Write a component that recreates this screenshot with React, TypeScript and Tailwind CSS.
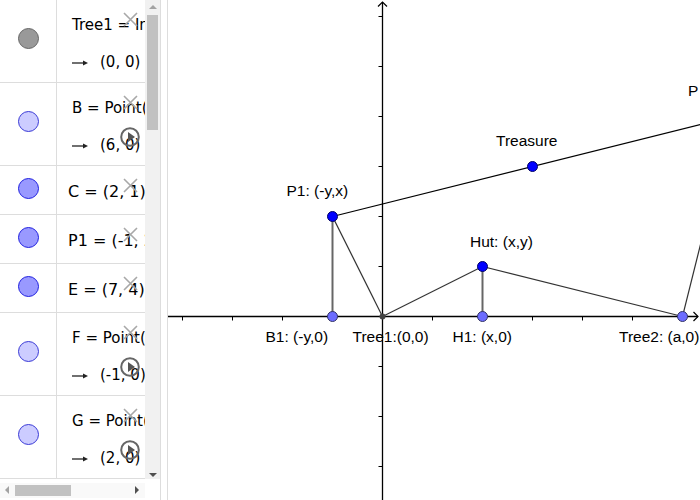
import React from 'react'

type Row = {
  tall: boolean
  dot: 'gray' | 'light' | 'mid'
  main: string
  value?: string
  play?: boolean
}

const rows: Row[] = [
  { tall: true, dot: 'gray', main: 'Tree1 = Intersect(xAxis, f)', value: '(0, 0)' },
  { tall: true, dot: 'light', main: 'B = Point(xAxis)', value: '(6, 0)', play: true },
  { tall: false, dot: 'mid', main: 'C = (2, 1)' },
  { tall: false, dot: 'mid', main: 'P1 = (-1, 2)' },
  { tall: false, dot: 'mid', main: 'E = (7, 4)' },
  { tall: true, dot: 'light', main: 'F = Point(xAxis)', value: '(-1, 0)', play: true },
  { tall: true, dot: 'light', main: 'G = Point(xAxis)', value: '(2, 0)', play: true },
]

const dotClass = {
  gray: 'bg-[#999999] border-[#666666]',
  light: 'bg-[#ccccff] border-[#3a3ad6]',
  mid: 'bg-[#9999ff] border-[#2020e0]',
}

const listFont = { fontFamily: "'DejaVu Sans', 'Liberation Sans', sans-serif" }

const Arrow = () => (
  <svg width="16" height="8" viewBox="0 0 16 8" className="shrink-0">
    <line x1="0" y1="4" x2="13" y2="4" stroke="#222" strokeWidth="1.3" />
    <path d="M11 1.5 L16 4 L11 6.5 Z" fill="#222" />
  </svg>
)

const DeleteIcon = () => (
  <svg width="15" height="15" viewBox="0 0 15 15" className="absolute left-[123px] top-[12px]">
    <path d="M1 1 L14 14 M14 1 L1 14" stroke="#a8a8a8" strokeWidth="1.6" />
  </svg>
)

const PlayIcon = () => (
  <svg width="20" height="20" viewBox="0 0 20 20" className="absolute left-[120px] top-[44px]">
    <circle cx="10" cy="10" r="8.8" fill="none" stroke="#666" strokeWidth="2" />
    <path d="M8 5 L15 10 L8 15 Z" fill="#555" />
  </svg>
)

const AlgebraRow = ({ row }: { row: Row }) => (
  <div
    className={
      row.tall
        ? 'relative flex h-[83px] border-b border-[#dddddd]'
        : 'relative flex h-[49px] border-b border-[#dddddd]'
    }
  >
    <div
      className={
        row.tall
          ? 'flex w-[57px] shrink-0 items-center justify-center border-r border-[#dddddd] pb-[6px]'
          : 'flex w-[57px] shrink-0 items-center justify-center border-r border-[#dddddd] pb-[4px]'
      }
    >
      <div className={'h-[21px] w-[21px] rounded-full border ' + dotClass[row.dot]} />
    </div>
    <div
      className={
        row.tall
          ? 'flex flex-col pl-[15px] pt-[7px] text-[15px] text-black whitespace-nowrap'
          : 'flex flex-col pl-[11px] pt-[7px] text-[16px] text-black whitespace-nowrap'
      }
      style={listFont}
    >
      <div className="h-[37px] leading-[37px]">{row.main}</div>
      {row.value && (
        <div className="flex h-[37px] items-center gap-[12px] leading-[37px]">
          <Arrow />
          <span>{row.value}</span>
        </div>
      )}
    </div>
    <DeleteIcon />
    {row.play && <PlayIcon />}
  </div>
)

const AlgebraView = () => (
  <div className="flex h-[500px] w-[160px] shrink-0 flex-col bg-white">
    <div className="flex h-[479px]">
      <div className="w-[145px] overflow-hidden">
        {rows.map((r) => (
          <AlgebraRow key={r.main} row={r} />
        ))}
      </div>
      {/* vertical scrollbar */}
      <div className="relative flex w-[15px] flex-col items-center bg-[#f1f1f1]">
        <div className="mt-[5px] h-0 w-0 border-x-[4px] border-b-[4px] border-x-transparent border-b-[#a3a3a3]" />
        <div className="mt-[6px] h-[115px] w-[11px] bg-[#c1c1c1]" />
        <div className="mt-auto mb-[2px] h-0 w-0 border-x-[4px] border-t-[4px] border-x-transparent border-t-[#505050]" />
      </div>
    </div>
    {/* horizontal scrollbar */}
    <div className="flex h-[21px] items-center">
      <div className="mt-[1px] flex h-[15px] w-[145px] items-center bg-[#f9f9f9]">
        <div className="ml-[5px] h-0 w-0 border-y-[4px] border-r-[4px] border-y-transparent border-r-[#a3a3a3]" />
        <div className="ml-[6px] h-[11px] w-[56px] bg-[#c1c1c1]" />
        <div className="ml-auto mr-[6px] h-0 w-0 border-y-[4px] border-l-[4px] border-y-transparent border-l-[#505050]" />
      </div>
    </div>
  </div>
)

// graph in local coords (panel starts at x=168)
const ox = 214.5
const oy = 316.5
const u = 50
const px = (x: number) => ox + x * u
const py = (y: number) => oy - y * u

const GraphView = () => {
  const xTicks = [-4, -3, -2, -1, 1, 2, 3, 4, 5, 6]
  const yTicks = [-3, -2, -1, 1, 2, 3, 4, 5, 6]
  const labelStyle = { fontFamily: "'Liberation Sans', Arial, sans-serif", fontSize: 15.5 }
  return (
    <svg width="532" height="500" viewBox="0 0 532 500" className="block bg-white">
      {/* axes */}
      <line x1="0" y1={oy} x2="530" y2={oy} stroke="#000" strokeWidth="1.3" />
      <line x1={ox} y1="500" x2={ox} y2="2" stroke="#000" strokeWidth="1.3" />
      <path d={`M${ox - 4.5} 6.5 L${ox} 2 L${ox + 4.5} 6.5`} fill="none" stroke="#000" strokeWidth="1.2" />
      <path d={`M525.5 ${oy - 4.5} L530 ${oy} L525.5 ${oy + 4.5}`} fill="none" stroke="#000" strokeWidth="1.2" />
      {xTicks.map((t) => (
        <line key={'x' + t} x1={px(t)} y1={oy} x2={px(t)} y2={oy + 4} stroke="#000" strokeWidth="1" />
      ))}
      {yTicks.map((t) => (
        <line key={'y' + t} x1={ox - 4} y1={py(t)} x2={ox} y2={py(t)} stroke="#000" strokeWidth="1" />
      ))}

      {/* segments */}
      <line x1={px(-1)} y1={py(2)} x2={px(7)} y2={py(4)} stroke="#000" strokeWidth="1.2" />
      <line x1={px(-1)} y1={py(2)} x2={px(0)} y2={py(0)} stroke="#333" strokeWidth="1.2" />
      <line x1={px(0)} y1={py(0)} x2={px(2)} y2={py(1)} stroke="#333" strokeWidth="1.2" />
      <line x1={px(2)} y1={py(1)} x2={px(6)} y2={py(0)} stroke="#333" strokeWidth="1.2" />
      <line x1={px(6)} y1={py(0)} x2={px(7)} y2={py(4)} stroke="#333" strokeWidth="1.2" />
      <line x1={px(-1)} y1={py(2)} x2={px(-1)} y2={py(0)} stroke="#666" strokeWidth="2" />
      <line x1={px(2)} y1={py(1)} x2={px(2)} y2={py(0)} stroke="#666" strokeWidth="2" />

      {/* points */}
      <circle cx={px(0)} cy={py(0)} r="3" fill="#444" />
      {[[-1, 0], [2, 0], [6, 0]].map(([x, y]) => (
        <circle key={'l' + x} cx={px(x)} cy={py(y)} r="5" fill="#6c6cff" stroke="#333366" strokeWidth="1" />
      ))}
      {[[-1, 2], [3, 3], [2, 1]].map(([x, y]) => (
        <circle key={'d' + x} cx={px(x)} cy={py(y)} r="5" fill="#0000ff" stroke="#000066" strokeWidth="1" />
      ))}

      {/* labels */}
      <g style={labelStyle} fill="#000">
        <text x="328" y="146">Treasure</text>
        <text x="118.5" y="196">P1: (-y,x)</text>
        <text x="302" y="247">Hut: (x,y)</text>
        <text x="97.5" y="342">B1: (-y,0)</text>
        <text x="184.5" y="342">Tree1:(0,0)</text>
        <text x="284.5" y="342">H1: (x,0)</text>
        <text x="451" y="342">Tree2: (a,0)</text>
        <text x="520" y="96">P</text>
      </g>
    </svg>
  )
}

export default function App() {
  return (
    <div className="flex h-[500px] w-[700px] overflow-hidden bg-white">
      <AlgebraView />
      <div className="w-[1px] bg-[#dddddd]" />
      <div className="w-[6px] bg-white" />
      <div className="w-[1px] bg-[#dddddd]" />
      <GraphView />
    </div>
  )
}
